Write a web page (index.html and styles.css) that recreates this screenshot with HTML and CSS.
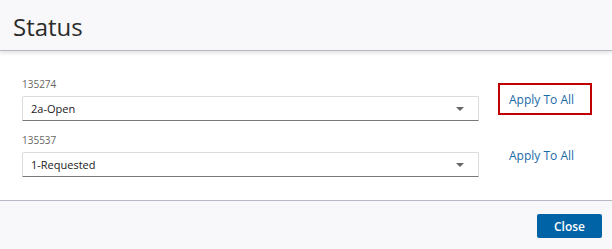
FILE: index.html
```html
<!DOCTYPE html>
<html lang="en">
<head>
    <meta charset="UTF-8">
    <meta name="viewport" content="width=device-width, initial-scale=1.0">
    <title>Status</title>
    <link rel="stylesheet" href="styles.css">
</head>
<body>
    <div class="modal">
        <div class="modal-header">
            <h2>Status</h2>
        </div>

        <div class="modal-body">
            <div class="row">
                <div class="field">
                    <label>135274</label>
                    <div class="select">
                        <span>2a-Open</span>
                        <span class="arrow"></span>
                    </div>
                </div>
                <a class="apply focused" href="#">Apply To All</a>
            </div>
            <div class="row">
                <div class="field">
                    <label>135537</label>
                    <div class="select">
                        <span>1-Requested</span>
                        <span class="arrow"></span>
                    </div>
                </div>
                <a class="apply" href="#">Apply To All</a>
            </div>
        </div>

        <div class="modal-footer">
            <button class="btn-close">Close</button>
        </div>
    </div>
</body>
</html>
```

FILE: styles.css
```css
/* Reset */
* {
    margin: 0;
    padding: 0;
    box-sizing: border-box;
}

body {
    font-family: 'Open Sans', Arial, sans-serif;
    background-color: #fff;
    color: #222;
}

.modal {
    width: 612px;
    height: 249px;
    display: flex;
    flex-direction: column;
}

/* Header */
.modal-header {
    height: 51px;
    padding-left: 13px;
    display: flex;
    align-items: center;
    background-color: #f8f8fa;
    border-bottom: 1px solid #b9b8c5;
    box-shadow: 0 2px 4px rgba(0, 0, 0, 0.12);
    position: relative;
}

.modal-header h2 {
    font-size: 24px;
    font-weight: 400;
    color: #2b2b2b;
    padding-top: 2px;
}

/* Body */
.modal-body {
    flex: 1;
    padding: 26px 20px 0 22px;
    display: flex;
    flex-direction: column;
    gap: 12px;
}

.row {
    display: flex;
    align-items: center;
}

.field {
    width: 457px;
}

.field label {
    display: block;
    font-size: 10px;
    line-height: 15px;
    color: #666;
    margin-bottom: 4px;
}

.select {
    height: 25px;
    padding: 0 14px 0 8px;
    display: flex;
    align-items: center;
    justify-content: space-between;
    font-size: 11px;
    color: #222;
    border: 1px solid #dcdcdc;
    border-bottom: 1px solid #7a7a7a;
    border-radius: 2px 2px 0 0;
}

.arrow {
    width: 0;
    height: 0;
    border-left: 4px solid transparent;
    border-right: 4px solid transparent;
    border-top: 4px solid #666;
}

/* Apply To All links */
.apply {
    margin-left: 19px;
    width: 94px;
    height: 32px;
    padding-left: 9px;
    display: flex;
    align-items: center;
    font-size: 12px;
    color: #1b6aa8;
    text-decoration: none;
    border: 2px solid transparent;
}

.apply.focused {
    border-color: #c00000;
}

/* Footer */
.modal-footer {
    height: 49px;
    padding-right: 10px;
    display: flex;
    align-items: center;
    justify-content: flex-end;
    background-color: #f8f8fa;
    border-top: 1px solid #b9b8c5;
}

.btn-close {
    width: 65px;
    height: 24px;
    font-family: 'Open Sans', Arial, sans-serif;
    font-size: 12px;
    font-weight: 600;
    color: #fff;
    background-color: #0063a6;
    border: none;
    border-radius: 2px;
    margin-top: 2px;
}
```
